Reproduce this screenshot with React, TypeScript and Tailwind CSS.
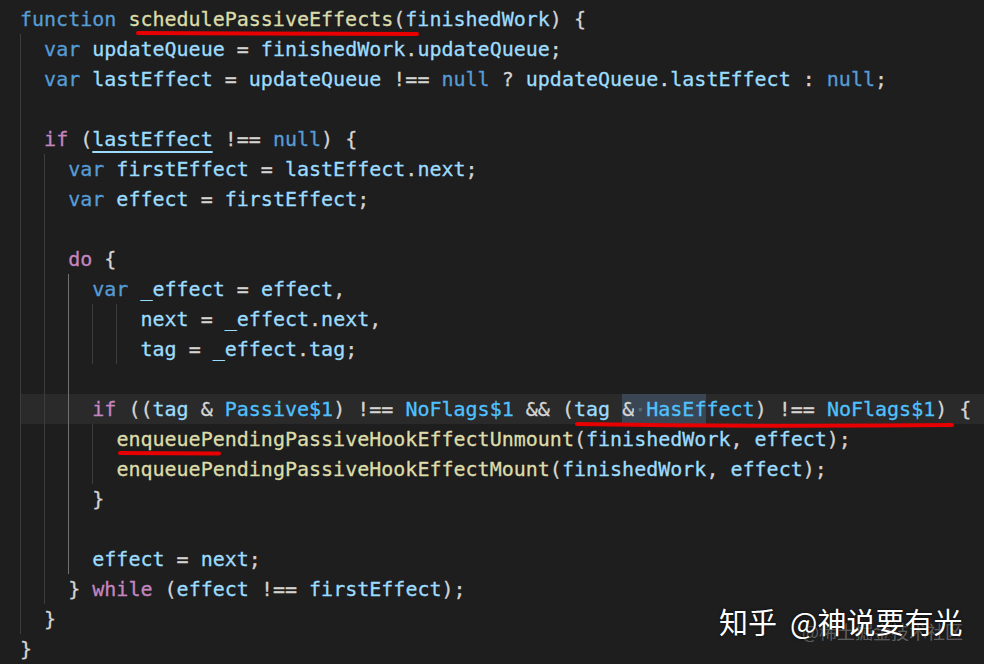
import React from "react";

type Tok = { t: string; c: string; u?: boolean; sel?: boolean };
type Line = { indent: number; guides: number[]; toks: Tok[]; current?: boolean };

const K = "text-[#569cd6]";
const F = "text-[#dcdcaa]";
const V = "text-[#9cdcfe]";
const P = "text-[#d4d4d4]";
const C = "text-[#c586c0]";
const N = "text-[#4fc1ff]";

const k = (t: string): Tok => ({ t, c: K });
const f = (t: string): Tok => ({ t, c: F });
const v = (t: string): Tok => ({ t, c: V });
const p = (t: string): Tok => ({ t, c: P });
const c = (t: string): Tok => ({ t, c: C });
const n = (t: string): Tok => ({ t, c: N });

const lines: Line[] = [
  { indent: 0, guides: [], toks: [k("function"), p(" "), f("schedulePassiveEffects"), p("("), v("finishedWork"), p(") {")] },
  { indent: 2, guides: [0], toks: [k("var"), p(" "), v("updateQueue"), p(" = "), v("finishedWork"), p("."), v("updateQueue"), p(";")] },
  {
    indent: 2,
    guides: [0],
    toks: [k("var"), p(" "), v("lastEffect"), p(" = "), v("updateQueue"), p(" !== "), k("null"), p(" ? "), v("updateQueue"), p("."), v("lastEffect"), p(" : "), k("null"), p(";")],
  },
  { indent: 2, guides: [0], toks: [] },
  { indent: 2, guides: [0], toks: [c("if"), p(" ("), { t: "lastEffect", c: V, u: true }, p(" !== "), k("null"), p(") {")] },
  { indent: 4, guides: [0, 2], toks: [k("var"), p(" "), v("firstEffect"), p(" = "), v("lastEffect"), p("."), v("next"), p(";")] },
  { indent: 4, guides: [0, 2], toks: [k("var"), p(" "), v("effect"), p(" = "), v("firstEffect"), p(";")] },
  { indent: 4, guides: [0, 2], toks: [] },
  { indent: 4, guides: [0, 2], toks: [c("do"), p(" {")] },
  { indent: 6, guides: [0, 2, 4], toks: [k("var"), p(" "), v("_effect"), p(" = "), v("effect"), p(",")] },
  { indent: 10, guides: [0, 2, 4, 6, 8], toks: [v("next"), p(" = "), v("_effect"), p("."), v("next"), p(",")] },
  { indent: 10, guides: [0, 2, 4, 6, 8], toks: [v("tag"), p(" = "), v("_effect"), p("."), v("tag"), p(";")] },
  { indent: 6, guides: [0, 2, 4], toks: [] },
  {
    indent: 6,
    guides: [0, 2, 4],
    current: true,
    toks: [
      c("if"),
      p(" (("),
      v("tag"),
      p(" & "),
      n("Passive$1"),
      p(") !== "),
      n("NoFlags$1"),
      p(" && ("),
      v("tag"),
      p(" "),
      { t: "&", c: P, sel: true },
      { t: "·", c: "text-[#5f6b76]", sel: true },
      { t: "HasEf", c: N, sel: true },
      n("fect"),
      p(") !== "),
      n("NoFlags$1"),
      p(") {"),
    ],
  },
  { indent: 8, guides: [0, 2, 4, 6], toks: [f("enqueuePendingPassiveHookEffectUnmount"), p("("), v("finishedWork"), p(", "), v("effect"), p(");")] },
  { indent: 8, guides: [0, 2, 4, 6], toks: [f("enqueuePendingPassiveHookEffectMount"), p("("), v("finishedWork"), p(", "), v("effect"), p(");")] },
  { indent: 6, guides: [0, 2, 4], toks: [p("}")] },
  { indent: 6, guides: [0, 2, 4], toks: [] },
  { indent: 6, guides: [0, 2, 4], toks: [v("effect"), p(" = "), v("next"), p(";")] },
  { indent: 4, guides: [0, 2], toks: [p("} "), c("while"), p(" ("), v("effect"), p(" !== "), v("firstEffect"), p(");")] },
  { indent: 2, guides: [0], toks: [p("}")] },
  { indent: 0, guides: [], toks: [p("}")] },
];

// rows 10..19 (1-based) sit inside the block holding the cursor
const activeFrom = 10;
const activeTo = 19;

function CodeLine({ line, row }: { line: Line; row: number }) {
  const cols: React.ReactNode[] = [];
  for (let i = 0; i < line.indent; i += 2) {
    const hasGuide = line.guides.includes(i);
    const active = hasGuide && i === 4 && row >= activeFrom && row <= activeTo;
    cols.push(
      <span
        key={i}
        className={
          active
            ? "shadow-[inset_1px_0_0_#707070]"
            : hasGuide
              ? "shadow-[inset_1px_0_0_#3d3d3d]"
              : ""
        }
      >
        {"  "}
      </span>,
    );
  }
  return (
    <div
      className={`flex h-[30px] items-stretch whitespace-pre ${line.current ? "bg-[#2a2a2a]" : ""}`}
    >
      {cols}
      <span className="flex items-center">
        {line.toks.map((tk, j) => (
          <span
            key={j}
            className={`${tk.c} ${tk.u ? "underline decoration-[1.5px] underline-offset-[5px]" : ""} ${tk.sel ? "flex h-[30px] items-center bg-[#3a4653]" : ""}`}
          >
            {tk.t}
          </span>
        ))}
      </span>
    </div>
  );
}

export default function App() {
  return (
    <div className="relative h-[664px] w-[984px] overflow-hidden bg-[#1e1e1e] font-['DejaVu_Sans_Mono',monospace] text-[20px] leading-[30px] [-webkit-text-stroke:0.3px_currentColor]">
      <div className="pl-[20px] pt-[4px]">
        {lines.map((line, i) => (
          <CodeLine key={i} line={line} row={i + 1} />
        ))}
      </div>

      {/* red pen marks */}
      <svg
        className="pointer-events-none absolute inset-0"
        width="984"
        height="664"
        viewBox="0 0 984 664"
      >
        <g stroke="#e80000" strokeWidth="4" strokeLinecap="round" fill="none">
          <path d="M138 33 Q280 34 417 34" />
          <path d="M120 453 L219 453.5" />
          <path d="M577 424 Q760 427 952 425" />
        </g>
      </svg>

      {/* watermarks */}
      <div className="absolute left-[802px] top-[620px] font-['Noto_Sans_CJK_SC',sans-serif] text-[18px] leading-[22px] text-white/30 [-webkit-text-stroke:0]">
        @稀土掘金技术社区
      </div>
      <div className="absolute left-[719px] top-[602px] flex gap-[13px] font-['Noto_Sans_CJK_SC',sans-serif] text-[29px] leading-[38px] text-white [-webkit-text-stroke:0] [text-shadow:0_0_3px_rgba(0,0,0,0.8)]">
        <span>知乎</span>
        <span>@神说要有光</span>
      </div>
    </div>
  );
}
